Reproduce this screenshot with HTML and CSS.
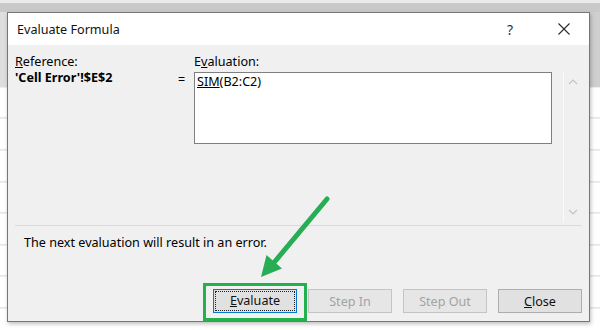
FILE: index.html
```html
<!DOCTYPE html>
<html lang="en">
<head>
  <meta charset="UTF-8">
  <title>Evaluate Formula</title>
  <link rel="stylesheet" href="styles.css">
</head>
<body>

<div class="sheet">
  <div class="dialog">
    <div class="titlebar">
      <span class="title">Evaluate Formula</span>
      <span class="help">?</span>
      <span class="close-x">
        <svg width="12" height="12" viewBox="0 0 12 12"><path d="M0.5 0.5 L11.5 11.5 M11.5 0.5 L0.5 11.5" stroke="#2b2b2b" stroke-width="1.1" fill="none"/></svg>
      </span>
    </div>

    <div class="main">
      <div class="ref-col">
        <div class="label"><u>R</u>eference:</div>
        <div class="ref-value">'Cell Error'!$E$2</div>
      </div>
      <div class="eq">=</div>
      <div class="eval-col">
        <div class="label">E<u>v</u>aluation:</div>
        <div class="eval-box"><u>SIM</u>(B2:C2)</div>
      </div>
      <div class="scroll">
        <svg width="10" height="6" viewBox="0 0 10 6"><path d="M1 5 L5 1 L9 5" stroke="#c4c4c4" stroke-width="1.2" fill="none"/></svg>
        <svg width="10" height="6" viewBox="0 0 10 6"><path d="M1 1 L5 5 L9 1" stroke="#c4c4c4" stroke-width="1.2" fill="none"/></svg>
      </div>
    </div>

    <div class="sep"></div>
    <p class="msg">The next evaluation will result in an error.</p>

    <div class="buttons">
      <div class="btn-wrap">
        <button class="btn focused"><span class="focus-ring"><u>E</u>valuate</span></button>
        <span class="highlight"></span>
      </div>
      <button class="btn" disabled>Step In</button>
      <button class="btn" disabled>Step Out</button>
      <button class="btn"><u>C</u>lose</button>
    </div>
  </div>
</div>

<!-- annotation arrow -->
<svg class="arrow" width="600" height="330" viewBox="0 0 600 330">
  <line x1="327" y1="199" x2="272" y2="265" stroke="#27ae55" stroke-width="5" stroke-linecap="round"/>
  <polygon points="261,277 266.5,255 282,268.5" fill="#27ae55"/>
</svg>

</body>
</html>
```

FILE: styles.css
```css
body { margin: 0; width: 600px; height: 330px; overflow: hidden; position: relative; font-family: "Noto Sans", "Open Sans", sans-serif; font-size: 12.6px; color: #000;
  background:
    linear-gradient(#ebebeb 0 3px, #c9c9c9 3px 12px, transparent 12px),
    linear-gradient(to right, #dedede 0 8px, transparent 8px 588px, #cfcfcf 588px),
    repeating-linear-gradient(to bottom, transparent 0 30.6px, #d6d6d6 30.6px 31.6px),
    #fff;
  background-size: 100% 100%, 100% 87px, 100% 100%, auto;
  background-repeat: no-repeat, no-repeat, repeat, repeat;
  background-position: 0 0, 0 0, 0 -7.6px, 0 0;
}

.sheet { padding: 12px 0 0 7px; }

.dialog { width: 583px; height: 310px; box-sizing: border-box; border: 1px solid #767676; background: #f0f0f0; display: flex; flex-direction: column; box-shadow: 1px 2px 4px rgba(0,0,0,0.25); }

.titlebar { height: 32px; background: #fff; display: flex; align-items: center; padding-left: 9px; }
.title { font-size: 12.6px; color: #111; flex: 1; }
.help { font-size: 14px; color: #333; width: 12px; margin-right: 39px; }
.close-x { width: 12px; height: 12px; margin-right: 19px; display: flex; }

.main { height: 180px; display: flex; padding-left: 7px; }
.ref-col { width: 160px; padding-top: 9px; }
.label { line-height: 16px; }
.ref-value { line-height: 16px; font-weight: bold; }
.eq { width: 16px; padding: 27px 0 0 3px; line-height: 16px; }
.eval-col { width: 358px; padding-top: 9px; }
.eval-box { margin-top: 2px; height: 72px; box-sizing: border-box; border: 1px solid #7f7f7f; background: #fff; padding: 1px 2px; line-height: 16px; }
.scroll { margin: 27px 0 0 11px; width: 19px; height: 150px; border-left: 1px solid #fafafa; display: flex; flex-direction: column; justify-content: space-between; align-items: center; padding: 7px 0; box-sizing: border-box; }

.sep { height: 1px; background: #dadada; margin: 0 7px; }
.msg { margin: 9px 0 0 16px; line-height: 16px; }

.buttons { margin-top: auto; display: flex; justify-content: flex-end; gap: 11px; padding: 0 7px 8px 0; }
.btn { width: 84px; height: 24px; box-sizing: border-box; background: #e1e1e1; border: 1px solid #adadad; font-family: inherit; font-size: 12.6px; color: #111; padding: 0; }
.btn:disabled { background: #e6e6e6; border-color: #c4c4c4; color: #a3a3a3; }
.focused { border-color: #0078d7; padding: 1px; }
.focus-ring { display: block; height: 100%; box-sizing: border-box; border: 1px dotted #222; line-height: 18px; }
.btn-wrap { position: relative; display: flex; }
.highlight { position: absolute; top: -6px; bottom: -8px; left: -10px; right: -10px; border: 3px solid #22b14c; }

.arrow { position: absolute; left: 0; top: 0; pointer-events: none; }
```
